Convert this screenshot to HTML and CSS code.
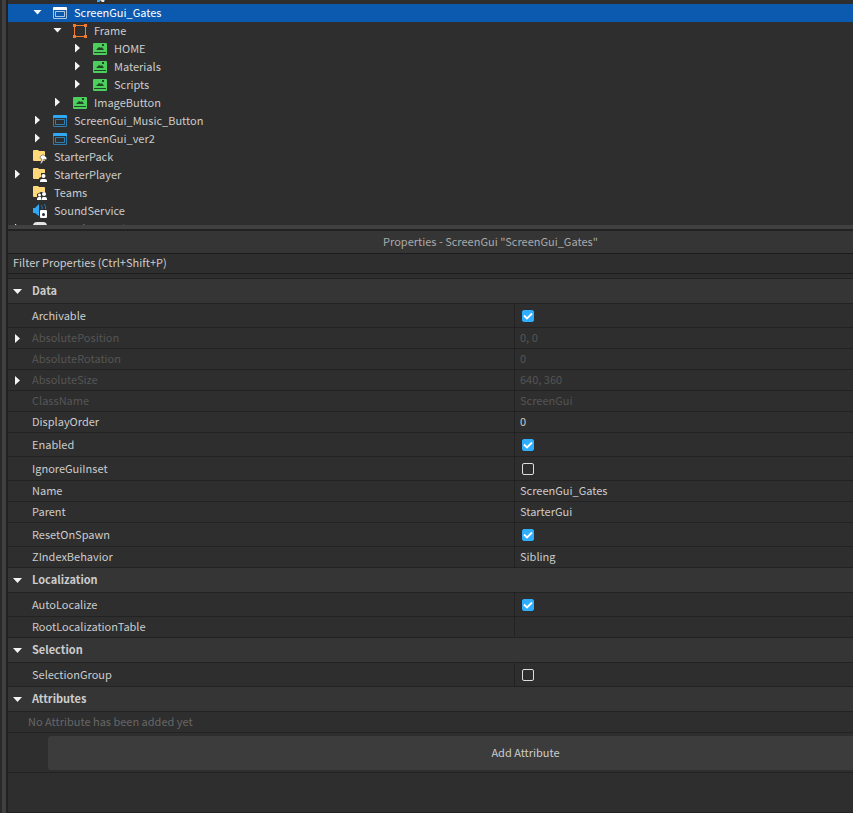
FILE: index.html
```html
<!DOCTYPE html>
<html lang="en">
  <head>
    <meta charset="UTF-8" />
    <meta name="viewport" content="width=device-width, initial-scale=1.0" />
    <title>Properties - ScreenGui</title>
    <link rel="stylesheet" href="styles.css">
  </head>
  <body>
    <!-- shared icons -->
    <svg class="sprite" aria-hidden="true">
      <symbol id="screen" viewBox="0 0 14 12">
        <path class="bar" d="M0 1q0-1 1-1h12q1 0 1 1v2H0z" />
        <path class="line" d="M.5 3v8q0 .5.5.5h12q.5 0 .5-.5V3" />
        <path class="line" d="M2.500 4.500h9v5h-9z" />
      </symbol>
      <symbol id="frame" viewBox="0 0 14 14">
        <path d="M1.500 1.500h11v11h-11z" fill="none" stroke="#f37a31" />
        <path d="M0 0h3v3H0zM11 0h3v3h-3zM0 11h3v3H0zM11 11h3v3h-3z" fill="#f37a31" />
      </symbol>
      <symbol id="image" viewBox="0 0 14 12">
        <rect width="14" height="12" rx="1" fill="#4ccf5c" />
        <path d="M3 7l3-3 2 1 1-1 2 3zM9 1h2v2H9zM1 9h12v1H1z" fill="#1f4525" />
      </symbol>
      <symbol id="folder" viewBox="0 0 14 13">
        <path d="M0 1q0-1 1-1h4l1 1h5q1 0 1 1v8q0 1-1 1H1q-1 0-1-1z" fill="#ffd979" />
      </symbol>
    </svg>

    <div class="studio">
      <section class="explorer" aria-label="Explorer">
        <ul class="tree">
          <li class="node level-3 above"><span class="arrow"></span><span class="icon"><svg width="14" height="14" viewBox="0 0 14 14"><path d="M4 10h3v4H4z" fill="#2fa8f5" /><path d="M7 9h3l2 2-1 3H9l-2-2z" fill="#e8e8e8" /></svg></span></li>
          <li class="node level-1 selected"><span class="arrow open"></span><span class="icon"><svg class="screen" width="14" height="12"><use href="#screen" /></svg></span>ScreenGui_Gates</li>
          <li class="node level-2"><span class="arrow open"></span><span class="icon"><svg width="14" height="14"><use href="#frame" /></svg></span>Frame</li>
          <li class="node level-3"><span class="arrow closed"></span><span class="icon"><svg width="14" height="12"><use href="#image" /></svg></span>HOME</li>
          <li class="node level-3"><span class="arrow closed"></span><span class="icon"><svg width="14" height="12"><use href="#image" /></svg></span>Materials</li>
          <li class="node level-3"><span class="arrow closed"></span><span class="icon"><svg width="14" height="12"><use href="#image" /></svg></span>Scripts</li>
          <li class="node level-2"><span class="arrow closed"></span><span class="icon"><svg width="14" height="12"><use href="#image" /></svg></span>ImageButton</li>
          <li class="node level-1"><span class="arrow closed"></span><span class="icon"><svg class="screen" width="14" height="12"><use href="#screen" /></svg></span>ScreenGui_Music_Button</li>
          <li class="node level-1"><span class="arrow closed"></span><span class="icon"><svg class="screen" width="14" height="12"><use href="#screen" /></svg></span>ScreenGui_ver2</li>
          <li class="node level-0"><span class="arrow"></span><span class="icon"><svg width="14" height="14" viewBox="0 0 14 14"><use href="#folder" width="14" height="13" /><path d="M7 7l2-2h2l3 3-1 2-2-1-2 4-2 1 2-5-2-1z" fill="#fff" stroke="#2e2e2e" stroke-width=".5" /></svg></span>StarterPack</li>
          <li class="node level-0"><span class="arrow closed"></span><span class="icon"><svg width="14" height="14" viewBox="0 0 14 14"><use href="#folder" width="14" height="13" /><path d="M6 14v-4l2-1V5h5v4l1 1v4z" fill="#2e2e2e" /><circle cx="10.500" cy="8" r="2" fill="#fff" /><path d="M7 14v-1q0-2 2-2h3q2 0 2 2v1z" fill="#fff" /></svg></span>StarterPlayer</li>
          <li class="node level-0"><span class="arrow"></span><span class="icon"><svg width="14" height="14" viewBox="0 0 14 14"><use href="#folder" width="14" height="13" /><path d="M4 14V8l4-2h6v8z" fill="#2e2e2e" /><circle cx="6.500" cy="9" r="1.500" fill="#fff" /><circle cx="11" cy="8" r="2" fill="#fff" /><path d="M4 14v-1q0-2 2-2h2v3zM8.500 14v-1q0-2 2-2h1.500q2 0 2 2v1z" fill="#fff" /></svg></span>Teams</li>
          <li class="node level-0"><span class="arrow"></span><span class="icon"><svg width="14" height="14" viewBox="0 0 14 14"><path d="M0 4h2l4-4v12L2 9H0z" fill="#2fa8f5" /><path d="M8 1q2 1.500 1 4M11 0q2.500 2 1.500 5" fill="none" stroke="#2378ad" /><rect x="7" y="6" width="7" height="8" rx="1" fill="#fff" /><circle cx="10.500" cy="10.500" r="1.500" fill="#2e2e2e" /></svg></span>SoundService</li>
          <li class="node level-0"><span class="arrow closed"></span><span class="icon"><svg width="14" height="14" viewBox="0 0 14 14"><rect width="14" height="13" rx="4" fill="#e4e4e4" /></svg></span>TextChatService</li>
        </ul>
      </section>

      <section class="properties">
        <h1 class="title">Properties - ScreenGui "ScreenGui_Gates"</h1>
        <input class="filter" type="text" placeholder="Filter Properties (Ctrl+Shift+P)" aria-label="Filter Properties" />

        <table class="grid">
          <colgroup>
            <col class="names" />
            <col />
          </colgroup>
          <tr class="group"><th colspan="2"><span class="arrow open"></span>Data</th></tr>
          <tr class="check"><td><label for="archivable">Archivable</label></td><td><input type="checkbox" id="archivable" checked /></td></tr>
          <tr class="readonly"><td><span class="arrow closed"></span>AbsolutePosition</td><td>0, 0</td></tr>
          <tr class="readonly"><td>AbsoluteRotation</td><td>0</td></tr>
          <tr class="readonly"><td><span class="arrow closed"></span>AbsoluteSize</td><td>640, 360</td></tr>
          <tr class="readonly"><td>ClassName</td><td>ScreenGui</td></tr>
          <tr><td>DisplayOrder</td><td>0</td></tr>
          <tr class="check"><td><label for="enabled">Enabled</label></td><td><input type="checkbox" id="enabled" checked /></td></tr>
          <tr class="check"><td><label for="inset">IgnoreGuiInset</label></td><td><input type="checkbox" id="inset" /></td></tr>
          <tr><td>Name</td><td>ScreenGui_Gates</td></tr>
          <tr><td>Parent</td><td>StarterGui</td></tr>
          <tr class="check"><td><label for="reset">ResetOnSpawn</label></td><td><input type="checkbox" id="reset" checked /></td></tr>
          <tr><td>ZIndexBehavior</td><td>Sibling</td></tr>
          <tr class="group"><th colspan="2"><span class="arrow open"></span>Localization</th></tr>
          <tr class="check"><td><label for="localize">AutoLocalize</label></td><td><input type="checkbox" id="localize" checked /></td></tr>
          <tr><td>RootLocalizationTable</td><td></td></tr>
          <tr class="group"><th colspan="2"><span class="arrow open"></span>Selection</th></tr>
          <tr class="check"><td><label for="selection">SelectionGroup</label></td><td><input type="checkbox" id="selection" /></td></tr>
          <tr class="group"><th colspan="2"><span class="arrow open"></span>Attributes</th></tr>
          <tr class="empty"><td colspan="2">No Attribute has been added yet</td></tr>
        </table>
        <div class="add">
          <button type="button">Add Attribute</button>
        </div>
      </section>
    </div>
  </body>
</html>
```
FILE: styles.css
```css
* {
  box-sizing: border-box;
}

body {
  margin: 0;
  background-color: #2e2e2e;
  color: #cccccc;
  font-family: "Noto Sans CJK SC", "Open Sans", sans-serif;
  font-size: 11px;
  line-height: 16px;
}

.sprite {
  position: absolute;
  width: 0;
  height: 0;
}

.studio {
  display: flex;
  flex-direction: column;
  height: 100vh;
  border-left: 2px solid #292929;
  box-shadow: inset 4px 0 #404040, inset 6px 0 #222222;
  padding-left: 6px;
  overflow: hidden;
}

/* explorer */
.explorer {
  flex: none;
  height: 225px;
  overflow: hidden;
}

.tree {
  margin: 0;
  padding: 0;
  list-style: none;
}

.node {
  display: flex;
  align-items: center;
  height: 18px;
  padding-bottom: 2px;
}

.node.above {
  margin-top: -14px;
}

.level-1 {
  padding-left: 20px;
}

.level-2 {
  padding-left: 40px;
}

.level-3 {
  padding-left: 60px;
}

.selected {
  background-color: #0b5ab0;
  color: #ffffff;
}

.node .arrow {
  width: 20px;
  margin-left: 5px;
}

.icon {
  display: flex;
  align-items: center;
  width: 21px;
  margin-top: 2px;
}

.arrow::before {
  content: "";
  display: block;
  background-color: #f4f4f4;
}

.arrow.open::before {
  width: 9px;
  height: 5px;
  clip-path: polygon(0 0, 100% 0, 50% 100%);
}

.arrow.closed::before {
  width: 5px;
  height: 9px;
  margin: 0 2px;
  clip-path: polygon(0 0, 100% 50%, 0 100%);
}

.bar {
  fill: currentColor;
}

.line {
  fill: none;
  stroke: currentColor;
  stroke-opacity: 0.65;
}

.screen {
  color: #2fa8f5;
}

.selected .screen {
  color: #ffffff;
}

/* properties */
.properties {
  flex: 1;
  display: flex;
  flex-direction: column;
  border-top: 4px solid #404040;
  border-bottom: 1px solid #222222;
}

.title {
  margin: 0;
  padding: 2px 0 4px 120px;
  border-top: 2px solid #222222;
  border-bottom: 1px solid #1c1c1c;
  background-color: #353535;
  color: #a9a9a9;
  font-size: 11px;
  font-weight: normal;
  text-align: center;
}

.filter {
  height: 20px;
  margin-bottom: 4px;
  padding: 0 5px 3px;
  border: 0;
  border-bottom: 1px solid #1c1c1c;
  background-color: #2e2e2e;
  color: #cccccc;
  font: inherit;
}

.filter::placeholder {
  color: #cccccc;
}

.grid {
  width: 100%;
  border-top: 1px solid #222222;
  border-spacing: 0;
  table-layout: fixed;
}

.names {
  width: 60%;
}

td,
th {
  height: 21px;
  padding: 0 0 2px 5px;
  border-bottom: 1px solid #222222;
  text-align: left;
}

td:first-child,
th {
  padding-left: 24px;
  border-right: 1px solid #222222;
}

.check td {
  height: 24px;
}

.check td:last-child {
  padding-bottom: 0;
}

.group th {
  height: 25px;
  border-right: 0;
  background-color: #353535;
}

.readonly {
  color: #555555;
}

.grid .arrow {
  display: inline-block;
  width: 19px;
  margin-left: -19px;
  line-height: 0;
  vertical-align: 1px;
}

.grid .arrow.closed {
  vertical-align: -1px;
}

.empty td:first-child {
  padding-left: 20px;
  border-right: 0;
  color: #666666;
}

input[type="checkbox"] {
  appearance: none;
  display: block;
  width: 12px;
  height: 12px;
  margin: 0 2px;
  border: 1px solid #dddddd;
  border-radius: 2px;
}

input[type="checkbox"]:checked {
  border-color: #2fadff;
  background: #2fadff url("data:image/svg+xml,%3Csvg xmlns='http://www.w3.org/2000/svg' viewBox='0 0 10 10'%3E%3Cpath d='M1 4.500l3 3 5-5' fill='none' stroke='white' stroke-width='1.800'/%3E%3C/svg%3E");
}

.add {
  padding: 3px 0 2px 40px;
  border-bottom: 1px solid #222222;
}

button {
  display: block;
  width: 100%;
  height: 34px;
  padding: 0 0 2px 150px;
  border: 0;
  border-radius: 3px 0 0 3px;
  background-color: #3c3c3c;
  color: #cccccc;
  font: inherit;
}
```
